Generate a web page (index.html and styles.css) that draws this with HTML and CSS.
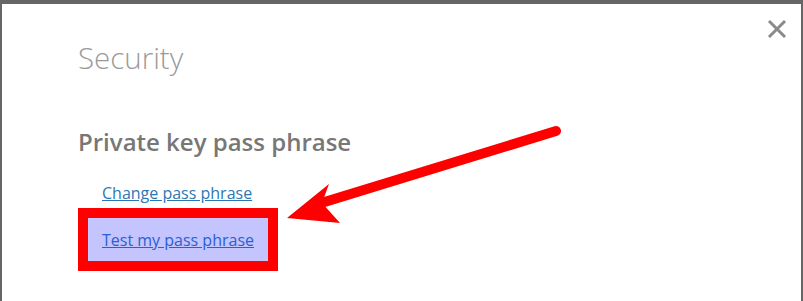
FILE: index.html
```html
<!DOCTYPE html>
<html>
<head>
<meta charset="utf-8">
<link rel="stylesheet" href="styles.css">
</head>
<body>
<div class="dialog">
  <button class="close" aria-label="Close">
    <svg width="20" height="20" viewBox="0 0 20 20"><path d="M2 2 L18 18 M18 2 L2 18" stroke="#8a8a8a" stroke-width="3" fill="none"/></svg>
  </button>
  <h1 class="title">Security</h1>
  <h2 class="section">Private key pass phrase</h2>
  <ul class="links">
    <li class="item"><a href="#">Change pass phrase</a></li>
    <li class="item highlight"><a href="#">Test my pass phrase</a></li>
  </ul>
  <svg class="arrow" width="803" height="301" viewBox="0 0 803 301">
    <line x1="556" y1="131" x2="318" y2="204" stroke="#ff0000" stroke-width="10" stroke-linecap="round"/>
    <polygon points="287,218 329,184 322,203 340,223" fill="#ff0000"/>
  </svg>
</div>
</body>
</html>
```
FILE: styles.css
```css
html, body {
  margin: 0;
  padding: 0;
}
body {
  background: #666666;
  width: 803px;
  height: 301px;
  overflow: hidden;
  font-family: "Open Sans", "Liberation Sans", sans-serif;
}
.dialog {
  position: relative;
  margin: 4px 2px 0 2px;
  height: 297px;
  background: #ffffff;
  padding: 0 0 0 76px;
  box-sizing: border-box;
}
.close {
  position: absolute;
  right: 14px;
  top: 15px;
  border: 0;
  background: none;
  padding: 0;
  width: 20px;
  height: 20px;
}
.close svg { display: block; }
.title {
  margin: 0;
  padding-top: 34px;
  font-size: 29.5px;
  font-weight: 300;
  color: #9a9a9a;
  line-height: 40px;
}
.section {
  margin: 0;
  padding-top: 48px;
  font-size: 24px;
  font-weight: 600;
  color: #777777;
  line-height: 32px;
}
.links {
  list-style: none;
  margin: 0;
  padding: 0;
}
.item {
  font-size: 16px;
  line-height: 22px;
  padding-left: 24px;
}
.item:first-child {
  padding-top: 24px;
}
.item a {
  color: #2c78b3;
  text-decoration: underline;
}
.highlight {
  margin-top: 4px;
  background: #c4c4ff;
  border: 10px solid #ff0000;
  display: flex;
  align-items: center;
  box-sizing: border-box;
  width: 200px;
  height: 63px;
  padding-left: 14px;
}
.highlight a {
  color: #2a60d0;
}
.arrow {
  position: absolute;
  left: -2px;
  top: -4px;
  pointer-events: none;
}
```
